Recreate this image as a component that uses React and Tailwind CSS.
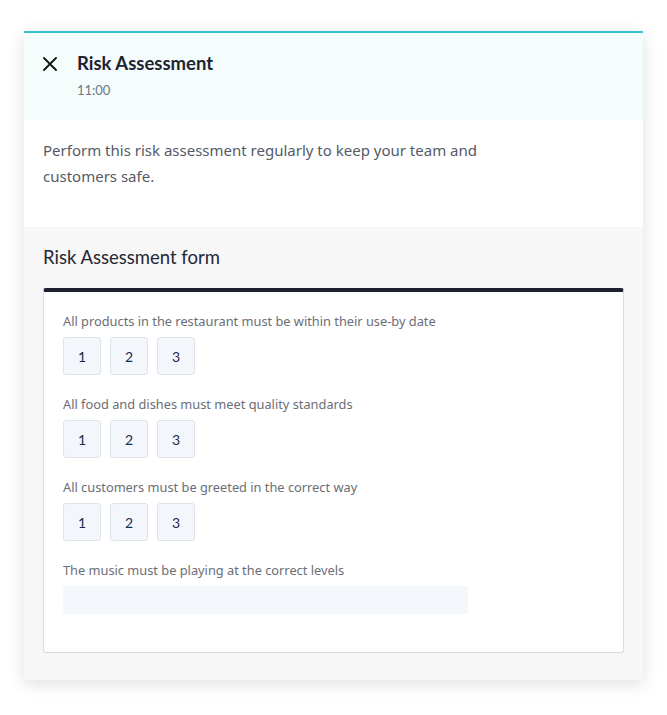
const QUESTIONS = [
  'All products in the restaurant must be within their use-by date',
  'All food and dishes must meet quality standards',
  'All customers must be greeted in the correct way',
];

function ScoreButtons() {
  return (
    <div className="flex gap-[9px] mt-[7px]">
      {[1, 2, 3].map(n => (
        <button
          key={n}
          className="w-[38px] h-[38px] rounded-[3px] border border-[#dfe4ea] bg-[#f3f6fa] text-[14px] text-[#1e2a4a] flex items-center justify-center"
        >
          {n}
        </button>
      ))}
    </div>
  );
}

export default function App() {
  return (
    <div className="min-h-[715px] bg-white pt-[31px] pl-[24px]" style={{ fontFamily: 'Lato, "Noto Sans", sans-serif' }}>
      <div className="w-[619px] border-t-2 border-[#36c2cc] shadow-[0_4px_16px_rgba(0,0,0,0.13)]">

        {/* Header */}
        <div className="h-[87px] bg-[#f4fdfc] flex items-start pl-[19px] pt-[17px]">
          <svg width="14" height="14" viewBox="0 0 14 14" className="mt-[7px] shrink-0">
            <path d="M1 1L13 13M13 1L1 13" stroke="#111" strokeWidth="1.8" strokeLinecap="round" />
          </svg>
          <div className="ml-[20px]">
            <p className="text-[18.5px] font-bold text-[#1f2230] leading-[26px]">Risk Assessment</p>
            <p className="text-[13px] text-[#707585] mt-[4px] leading-[20px]">11:00</p>
          </div>
        </div>

        {/* Description */}
        <div className="bg-white h-[107px] px-[19px] pt-[17px]">
          <p className="text-[15px] text-[#555a66] leading-[26px] max-w-[450px]" style={{ fontFamily: '"Noto Sans", sans-serif' }}>
            Perform this risk assessment regularly to keep your team and customers safe.
          </p>
        </div>

        {/* Form section */}
        <div className="bg-[#f7f7f7] px-[19px] pt-[17px] pb-[27px]">
          <p className="text-[18.5px] text-[#252833] leading-[26px]">Risk Assessment form</p>

          <div className="mt-[18px] bg-white border border-[#dcdcdc] border-t-4 border-t-[#1f2133] rounded-[3px] px-[19px] pt-[20px] pb-[38px]">
            {QUESTIONS.map((q, i) => (
              <div key={i} className="mb-[20px]">
                <p className="text-[12.8px] text-[#6b6e76] leading-[18px]" style={{ fontFamily: '"Noto Sans", sans-serif' }}>{q}</p>
                <ScoreButtons />
              </div>
            ))}
            <div>
              <p className="text-[12.8px] text-[#6b6e76] leading-[18px]" style={{ fontFamily: '"Noto Sans", sans-serif' }}>
                The music must be playing at the correct levels
              </p>
              <div className="mt-[7px] w-[405px] h-[28px] bg-[#f3f6fa] rounded-[3px]" />
            </div>
          </div>
        </div>
      </div>
    </div>
  );
}
